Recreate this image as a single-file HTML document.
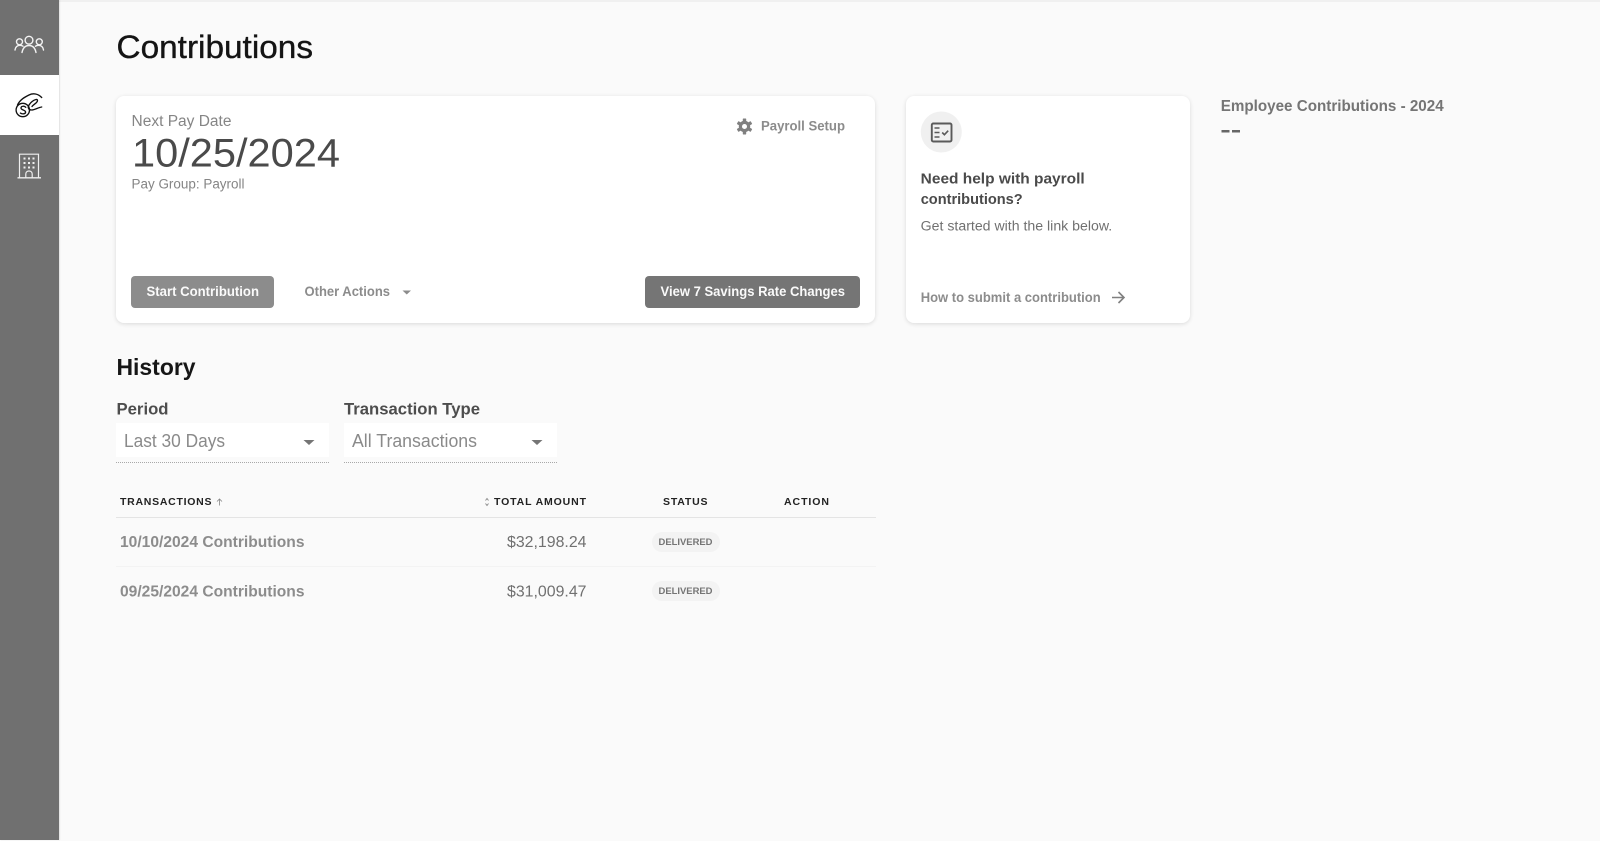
<!DOCTYPE html>
<html lang="en"><head><meta charset="utf-8"><title>Contributions</title>
<style>
html,body{margin:0;padding:0;width:1600px;height:841px;overflow:hidden;background:#fafafa;font-family:"Liberation Sans",sans-serif}
.abs{position:absolute}
#top{left:0;top:0;width:1600px;height:2px;background:#f0f0f0}
#side{left:0;top:0;width:59px;height:840px;background:#707070;box-shadow:1px 0 1px rgba(0,0,0,.1)}
#act{left:0;top:75px;width:59px;height:59.5px;background:#fff}
.card{background:#fff;border-radius:8px;box-shadow:0 1px 4px rgba(0,0,0,.13)}
.btn{border-radius:4px}
.sel{background:#fff;height:34px;top:422.5px;width:213px}
.dot{height:0;top:462px;width:213px;border-top:1px dotted #a8a8a8}
.badge{left:651.5px;width:68px;height:20.5px;background:#f3f3f3;border-radius:10px}
svg{position:absolute;left:0;top:0}
text{font-family:"Liberation Sans",sans-serif}
.b{font-weight:700}
</style></head><body>
<div class="abs" id="top"></div>
<div class="abs" id="side"></div>
<div class="abs" id="act"></div>
<div class="abs card" style="left:116.3px;top:95.5px;width:759px;height:227.5px"></div>
<div class="abs card" style="left:905.500px;top:95.5px;width:284.500px;height:227.5px"></div>
<div class="abs btn" style="left:131.200px;top:276px;width:142.800px;height:32px;background:#8c8c8c"></div>
<div class="abs btn" style="left:645.200px;top:276px;width:214.800px;height:32px;background:#757575"></div>
<div class="abs sel" style="left:116px"></div><div class="abs dot" style="left:116px"></div>
<div class="abs sel" style="left:344px"></div><div class="abs dot" style="left:344px"></div>
<div class="abs" style="left:116px;top:517px;width:760px;height:1px;background:#e4e4e4"></div>
<div class="abs" style="left:116px;top:566px;width:760px;height:1px;background:#f3f3f3"></div>
<div class="abs badge" style="top:531.5px"></div>
<div class="abs badge" style="top:580.5px"></div>
<svg width="1600" height="841" viewBox="0 0 1600 841">
<!-- people -->
<g fill="none" stroke="#f4f4f4" stroke-width="1.4" stroke-linecap="round">
<circle cx="29" cy="40.2" r="3.9"/><circle cx="19.5" cy="41.8" r="3"/><circle cx="39.3" cy="41.8" r="3"/>
<path d="M22 52.5C23 47.5 25.5 45.5 29 45.500S35 47.500 36 52.500"/>
<path d="M15 50C15.500 46.800 17.300 45.300 20 45.300C21.200 45.300 22.200 45.600 23 46.200"/>
<path d="M43.500 50C43 46.800 41.200 45.300 38.500 45.300C37.300 45.300 36.300 45.600 35.500 46.200"/>
</g>
<!-- hand with coin -->
<g fill="none" stroke="#111" stroke-width="1.35" stroke-linecap="round" stroke-linejoin="round">
<circle cx="22.800" cy="110" r="6.700"/>
<path d="M41.700 97.500C38 93.500 33 93 29 95C25 97 20 99.500 17.500 105"/>
<path d="M41.700 107C38 107.500 35 110 31.500 110C28.500 110 27.500 107.500 29 105C30.500 102.500 33.500 100 36 99.500C37.800 99.200 38 101 36.500 102.500C35 104 33 105 32 106.500"/>
<path d="M25.800 107.300C24.500 105.800 21.200 105.800 21 107.900C20.800 110.200 25.600 109.800 25.600 112.100C25.600 114 22.200 114.400 20.400 113.100"/>
</g>
<!-- building -->
<g fill="none" stroke="#efefef" stroke-width="1.2">
<path d="M19.500 177.500V154.200H38.500V177.500"/><path d="M17.500 177.800H41" stroke-width="1.400"/>
<path d="M25.800 177.500V174C25.800 172.200 27.200 171 29 171S32.200 172.200 32.200 174V177.500"/>
</g>
<g fill="#efefef">
<rect x="23.500" y="157.500" width="2" height="2"/><rect x="28" y="157.500" width="2" height="2"/><rect x="32.500" y="157.500" width="2" height="2"/>
<rect x="23.500" y="162" width="2" height="2"/><rect x="28" y="162" width="2" height="2"/><rect x="32.500" y="162" width="2" height="2"/>
<rect x="23.500" y="166.500" width="2" height="2"/><rect x="28" y="166.500" width="2" height="2"/><rect x="32.500" y="166.500" width="2" height="2"/>
</g>

<text x="116.500" y="58" font-size="32" fill="#141414" stroke="#141414" stroke-width=".35" textLength="196.500" lengthAdjust="spacingAndGlyphs">Contributions</text>
<text x="131.500" y="126" font-size="15.500" fill="#858585" textLength="100" lengthAdjust="spacingAndGlyphs">Next Pay Date</text>
<text x="132" y="166.500" font-size="40" fill="#4a4a4a" textLength="208" lengthAdjust="spacingAndGlyphs">10/25/2024</text>
<text x="131.500" y="188.500" font-size="13.500" fill="#858585" textLength="113" lengthAdjust="spacingAndGlyphs">Pay Group: Payroll</text>

<!-- gear -->
<g transform="translate(744.500 126.500)"><circle r="5.700" fill="#808080"/>
<g fill="#808080"><rect x="-1.700" y="-8" width="3.400" height="16" rx=".6"/><rect x="-1.700" y="-8" width="3.400" height="16" rx=".6" transform="rotate(60)"/><rect x="-1.700" y="-8" width="3.400" height="16" rx=".6" transform="rotate(120)"/></g>
<circle r="2.500" fill="#fff"/></g>
<text class="b" x="761" y="130.500" font-size="13.500" fill="#8c8c8c" textLength="84" lengthAdjust="spacingAndGlyphs">Payroll Setup</text>

<text class="b" x="146.500" y="296" font-size="13.500" fill="#fafafa" textLength="112.500" lengthAdjust="spacingAndGlyphs">Start Contribution</text>
<text class="b" x="304.500" y="296" font-size="13.500" fill="#8c8c8c" textLength="85.500" lengthAdjust="spacingAndGlyphs">Other Actions</text>
<path d="M402.500 290.500h8.500l-4.250 4z" fill="#8c8c8c"/>
<text class="b" x="660.500" y="296" font-size="13.500" fill="#fafafa" textLength="184.500" lengthAdjust="spacingAndGlyphs">View 7 Savings Rate Changes</text>

<!-- help card -->
<circle cx="941.300" cy="132" r="20.500" fill="#f0f0f0"/>
<g fill="none" stroke="#5a5a5a">
<rect x="931.800" y="123.500" width="19.700" height="18" rx="1.500" stroke-width="1.900"/>
<path d="M934.500 128h5M934.500 132.500h5M934.500 137h5" stroke-width="1.600"/>
<path d="M942.200 132.500l2.200 2.200 3.800-4" stroke-width="1.600"/>
</g>
<text class="b" x="920.700" y="183.500" font-size="15" fill="#4a4a4a" textLength="164" lengthAdjust="spacingAndGlyphs">Need help with payroll</text>
<text class="b" x="920.700" y="204" font-size="15" fill="#4a4a4a" textLength="102" lengthAdjust="spacingAndGlyphs">contributions?</text>
<text x="920.700" y="230.500" font-size="13.500" fill="#707070" textLength="191.500" lengthAdjust="spacingAndGlyphs">Get started with the link below.</text>
<text class="b" x="920.700" y="302" font-size="13.500" fill="#8c8c8c" textLength="180" lengthAdjust="spacingAndGlyphs">How to submit a contribution</text>
<path d="M1112 297.500h11.500M1118.500 292l5.500 5.500-5.500 5.500" fill="none" stroke="#808080" stroke-width="1.600"/>

<text class="b" x="1220.700" y="111" font-size="15.500" fill="#757575" textLength="223" lengthAdjust="spacingAndGlyphs">Employee Contributions - 2024</text>
<rect x="1221.500" y="130" width="8" height="2.500" fill="#666"/><rect x="1232" y="130" width="8" height="2.500" fill="#666"/>

<text class="b" x="116.500" y="375" font-size="23" fill="#161616" textLength="79" lengthAdjust="spacingAndGlyphs">History</text>
<text class="b" x="116.500" y="414.500" font-size="17" fill="#4d4d4d" textLength="52" lengthAdjust="spacingAndGlyphs">Period</text>
<text class="b" x="344" y="414.500" font-size="17" fill="#4d4d4d" textLength="136" lengthAdjust="spacingAndGlyphs">Transaction Type</text>
<text x="124" y="447" font-size="18" fill="#8a8a8a" textLength="101" lengthAdjust="spacingAndGlyphs">Last 30 Days</text>
<text x="352" y="447" font-size="18" fill="#8a8a8a" textLength="125" lengthAdjust="spacingAndGlyphs">All Transactions</text>
<path d="M303.500 440h11l-5.500 5z" fill="#757575"/>
<path d="M531.500 440h11l-5.500 5z" fill="#757575"/>

<text class="b" x="120" y="505" font-size="10.500" fill="#222" textLength="91.500" lengthAdjust="spacing">TRANSACTIONS</text>
<path d="M219.500 505.500v-6M217 501.500l2.500-2.500 2.500 2.500" fill="none" stroke="#888" stroke-width=".8"/>
<path d="M485.500 500.500l1.500-2 1.500 2M485.500 503.500l1.500 2 1.500-2" fill="none" stroke="#888" stroke-width=".9"/>
<text class="b" x="494" y="505" font-size="10.500" fill="#222" textLength="92" lengthAdjust="spacing">TOTAL AMOUNT</text>
<text class="b" x="663" y="505" font-size="10.500" fill="#222" textLength="44.500" lengthAdjust="spacing">STATUS</text>
<text class="b" x="784" y="505" font-size="10.500" fill="#222" textLength="45" lengthAdjust="spacing">ACTION</text>

<text class="b" x="120" y="547" font-size="15.500" fill="#8c8c8c" textLength="184.500" lengthAdjust="spacingAndGlyphs">10/10/2024 Contributions</text>
<text class="b" x="120" y="596.500" font-size="15.500" fill="#8c8c8c" textLength="184.500" lengthAdjust="spacingAndGlyphs">09/25/2024 Contributions</text>
<text x="507" y="547" font-size="15.500" fill="#707070" textLength="79.500" lengthAdjust="spacingAndGlyphs">$32,198.24</text>
<text x="507" y="596.500" font-size="15.500" fill="#707070" textLength="79.500" lengthAdjust="spacingAndGlyphs">$31,009.47</text>
<text class="b" x="658.500" y="545" font-size="9.500" fill="#757575" textLength="54" lengthAdjust="spacingAndGlyphs">DELIVERED</text>
<text class="b" x="658.500" y="594" font-size="9.500" fill="#757575" textLength="54" lengthAdjust="spacingAndGlyphs">DELIVERED</text>
</svg>
</body></html>
